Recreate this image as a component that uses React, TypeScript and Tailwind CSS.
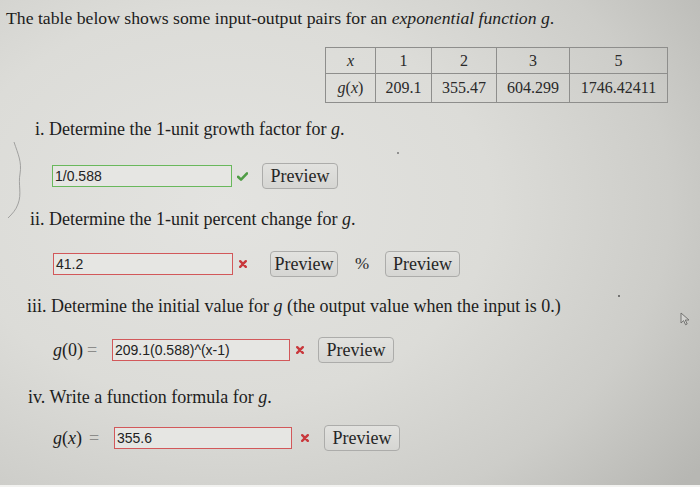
import React from "react";

const serif = "font-['Liberation_Serif','Times_New_Roman',serif]";
const sans = "font-['Liberation_Sans',Arial,sans-serif]";

function Check() {
  return (
    <svg width="11" height="9" viewBox="0 0 11 9" className="shrink-0">
      <path d="M1 4.8 L4 7.6 L10 1.4" fill="none" stroke="#4f9c45" strokeWidth="2.6" strokeLinecap="round" strokeLinejoin="round" />
    </svg>
  );
}

function Cross() {
  return (
    <svg width="8" height="8" viewBox="0 0 8 8" className="shrink-0">
      <path d="M1.2 1.2 L6.8 6.8 M6.8 1.2 L1.2 6.8" stroke="#c9383c" strokeWidth="2.4" strokeLinecap="round" />
    </svg>
  );
}

function Answer({ value, ok, width }: { value: string; ok: boolean; width: string }) {
  return (
    <div
      className={`${width} h-[22px] flex items-center border pl-[2px] bg-[#e6e6e3] ${sans} text-[14px] text-[#222] ${
        ok ? "border-[#69b85c]" : "border-[#d2585a]"
      }`}
    >
      {value}
    </div>
  );
}

function PreviewButton({ width = "w-[76px]" }: { width?: string }) {
  return (
    <button
      className={`${width} h-[26px] rounded-[4px] border border-[#acacaa] bg-gradient-to-b from-[#e2e2df] to-[#d6d6d3] ${serif} text-[18px] leading-none text-[#262626] flex items-center justify-center`}
    >
      Preview
    </button>
  );
}

function Prompt({ children, pl }: { children: React.ReactNode; pl: string }) {
  return (
    <div className={`h-[24px] flex items-center ${pl} ${serif} text-[18px] text-[#1d1d1d]`}>{children}</div>
  );
}

const cells = [
  ["1", "209.1"],
  ["2", "355.47"],
  ["3", "604.299"],
  ["5", "1746.42411"],
];

export default function App() {
  return (
    <div className="relative w-[700px] h-[487px] overflow-hidden bg-[radial-gradient(ellipse_85%_90%_at_32%_42%,#e3e3e0_0%,#dcdcd8_45%,#cdcdc9_75%,#b7b7b3_100%)]">
      <div className="flex flex-col">
        <div className={`h-[36px] flex items-center pl-[6px] ${serif} text-[17.7px] text-[#1d1d1d]`}>
          The table below shows some input-output pairs for an&nbsp;
          <i>exponential function g</i>.
        </div>

        <div className="mt-[11px] flex justify-end pr-[32px]">
          <table className={`table-fixed w-[342px] border-collapse ${serif} text-[16px] text-[#2a2a2a]`}>
            <colgroup>
              <col className="w-[50px]" />
              <col className="w-[56px]" />
              <col className="w-[65px]" />
              <col className="w-[73px]" />
              <col className="w-[98px]" />
            </colgroup>
            <tbody>
              <tr className="h-[26px]">
                <td className="border border-[#8e8e8c] text-center italic">x</td>
                {cells.map(([x]) => (
                  <td key={x} className="border border-[#8e8e8c] text-center">
                    {x}
                  </td>
                ))}
              </tr>
              <tr className="h-[29px]">
                <td className="border border-[#8e8e8c] text-center">
                  <i>g</i>(<i>x</i>)
                </td>
                {cells.map(([x, y]) => (
                  <td key={x} className="border border-[#8e8e8c] text-center">
                    {y}
                  </td>
                ))}
              </tr>
            </tbody>
          </table>
        </div>

        <div className="mt-[14px]">
          <Prompt pl="pl-[35px]">
            i. Determine the 1-unit growth factor for&nbsp;<i>g</i>.
          </Prompt>
        </div>
        <div className="mt-[22px] h-[26px] flex items-center pl-[52px]">
          <Answer value="1/0.588" ok width="w-[180px]" />
          <div className="ml-[5px] w-[25px]">
            <Check />
          </div>
          <PreviewButton />
        </div>

        <div className="mt-[18px]">
          <Prompt pl="pl-[30px]">
            ii. Determine the 1-unit percent change for&nbsp;<i>g</i>.
          </Prompt>
        </div>
        <div className="mt-[20px] h-[26px] flex items-center pl-[53px]">
          <Answer value="41.2" ok={false} width="w-[180px]" />
          <div className="ml-[6px] w-[31px]">
            <Cross />
          </div>
          <PreviewButton width="w-[68px]" />
          <span className={`ml-[17px] w-[30px] ${serif} text-[17px] text-[#2a2a2a]`}>%</span>
          <PreviewButton width="w-[75px]" />
        </div>

        <div className="mt-[17px]">
          <Prompt pl="pl-[27px]">
            iii. Determine the initial value for&nbsp;<i>g</i>&nbsp;(the output value when the input is 0.)
          </Prompt>
        </div>
        <div className="mt-[19px] h-[26px] flex items-center pl-[53px]">
          <span className={`${serif} text-[18px] text-[#1d1d1d] w-[34px]`}>
            <i>g</i>(0)
          </span>
          <span className={`${serif} text-[18px] text-[#8c8c8a] w-[25px]`}>=</span>
          <Answer value="209.1(0.588)^(x-1)" ok={false} width="w-[178px]" />
          <div className="ml-[6px] w-[22px]">
            <Cross />
          </div>
          <PreviewButton />
        </div>

        <div className="mt-[22px]">
          <Prompt pl="pl-[28px]">
            iv. Write a function formula for&nbsp;<i>g</i>.
          </Prompt>
        </div>
        <div className="mt-[16px] h-[26px] flex items-center pl-[53px]">
          <span className={`${serif} text-[18px] text-[#1d1d1d] w-[36px]`}>
            <i>g</i>(<i>x</i>)
          </span>
          <span className={`${serif} text-[18px] text-[#8c8c8a] w-[25px]`}>=</span>
          <Answer value="355.6" ok={false} width="w-[178px]" />
          <div className="ml-[9px] w-[23px]">
            <Cross />
          </div>
          <PreviewButton />
        </div>
      </div>

      {/* stray marks on the photographed screen */}
      <svg className="absolute left-[6px] top-[140px]" width="20" height="80" viewBox="0 0 20 80">
        <path d="M8 2 C12 14 16 22 14 34 C12 44 16 54 12 64 C10 70 6 74 2 78" fill="none" stroke="#9a9a98" strokeWidth="0.9" />
      </svg>
      <div className="absolute left-[397px] top-[152px] w-[2px] h-[2px] rounded-full bg-[#777]" />
      <div className="absolute left-[618px] top-[295px] w-[2px] h-[2px] rounded-full bg-[#555]" />
      <svg className="absolute left-[680px] top-[312px]" width="12" height="14" viewBox="0 0 12 14">
        <path d="M1 1 L1 11 L3.6 8.6 L5.6 12.8 L7.2 12 L5.3 8 L9 8 Z" fill="#d4d4d1" stroke="#6b6b69" strokeWidth="0.9" strokeLinejoin="round" />
      </svg>
      <div className="absolute left-0 bottom-0 w-full h-[2px] bg-[#f2f2f0]" />
    </div>
  );
}
